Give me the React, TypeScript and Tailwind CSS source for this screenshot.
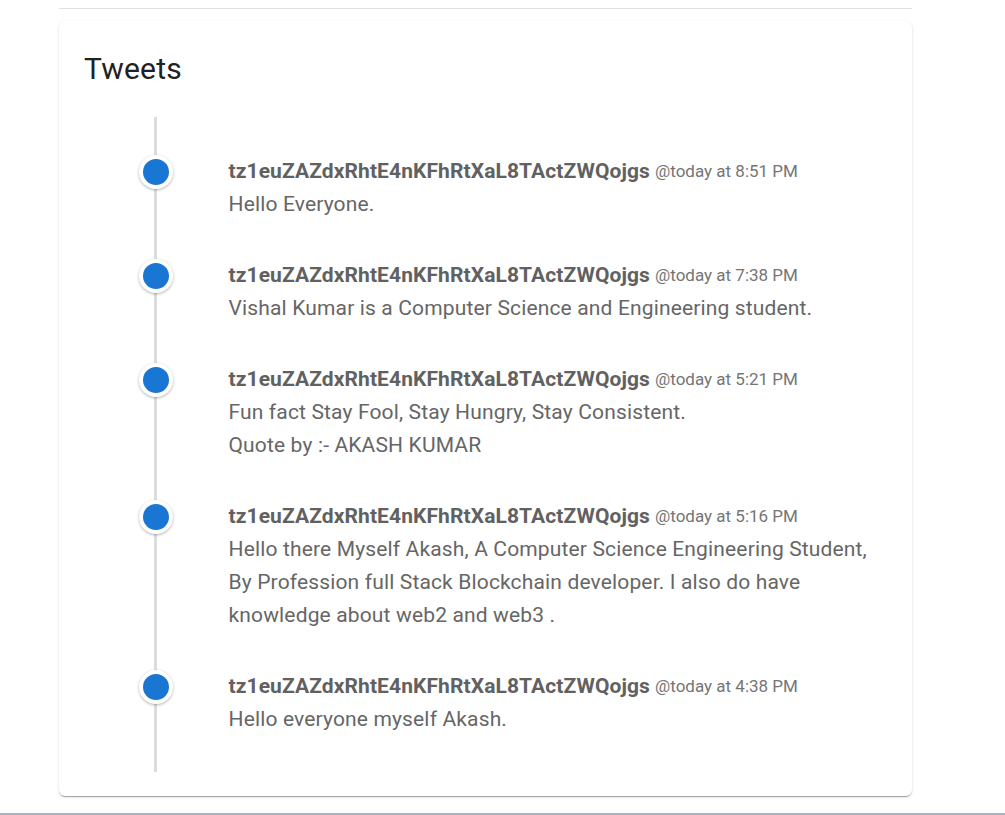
import React from "react";

const tweets = [
  { time: "8:51 PM", lines: ["Hello Everyone."] },
  { time: "7:38 PM", lines: ["Vishal Kumar is a Computer Science and Engineering student."] },
  { time: "5:21 PM", lines: ["Fun fact Stay Fool, Stay Hungry, Stay Consistent.", "Quote by :- AKASH KUMAR"] },
  {
    time: "5:16 PM",
    lines: [
      "Hello there Myself Akash, A Computer Science Engineering Student,",
      "By Profession full Stack Blockchain developer. I also do have",
      "knowledge about web2 and web3 .",
    ],
  },
  { time: "4:38 PM", lines: ["Hello everyone myself Akash."] },
];

export default function App() {
  return (
    <div className="w-[1005px] h-[815px] bg-white flex flex-col" style={{ fontFamily: "Roboto, 'Liberation Sans', sans-serif" }}>
      <div className="pt-[8px] pl-[59px]">
        <div className="w-[853px] h-px bg-[#e0e0e0]" />
      </div>
      <div className="pl-[59px] pt-[12px]">
        <div className="w-[853px] h-[775px] bg-white rounded-md shadow-[0_2px_1px_-1px_rgba(0,0,0,0.2),0_1px_1px_0_rgba(0,0,0,0.14),0_1px_3px_0_rgba(0,0,0,0.12)] pt-[27px] pl-[25px]">
          <h4 className="text-[30px] leading-[42px] text-[#212121] font-normal tracking-[0.2px]">Tweets</h4>
          <div className="mt-[27px] ml-[70px] border-l-[3px] border-[#dcdcdc] pb-[36px] w-[720px]">
            {tweets.map((t, i) => (
              <div key={i} className="flex items-start pt-[39px]">
                <div className="h-[32px] flex items-center -ml-[18.5px] shrink-0">
                  <div className="w-[34px] h-[34px] rounded-full bg-[#1976d2] border-4 border-white shadow-[0_1px_3px_rgba(0,0,0,0.3)] box-border" />
                </div>
                <div className="ml-[56px]">
                  <div className="h-[32px] flex items-center whitespace-nowrap">
                    <span className="text-[21px] font-bold text-[#616161] tracking-[0.1px]">tz1euZAZdxRhtE4nKFhRtXaL8TActZWQojgs</span>
                    <span className="text-[17px] text-[#757575] ml-[5px]">@today at {t.time}</span>
                  </div>
                  {t.lines.map((l, j) => (
                    <div key={j} className="text-[21px] leading-[33px] text-[#666666] tracking-[0.15px] whitespace-nowrap">
                      {l}
                    </div>
                  ))}
                </div>
              </div>
            ))}
          </div>
        </div>
      </div>
      <div className="flex-1" />
      <div className="h-[2px] bg-[#aab1c1]" />
    </div>
  );
}
